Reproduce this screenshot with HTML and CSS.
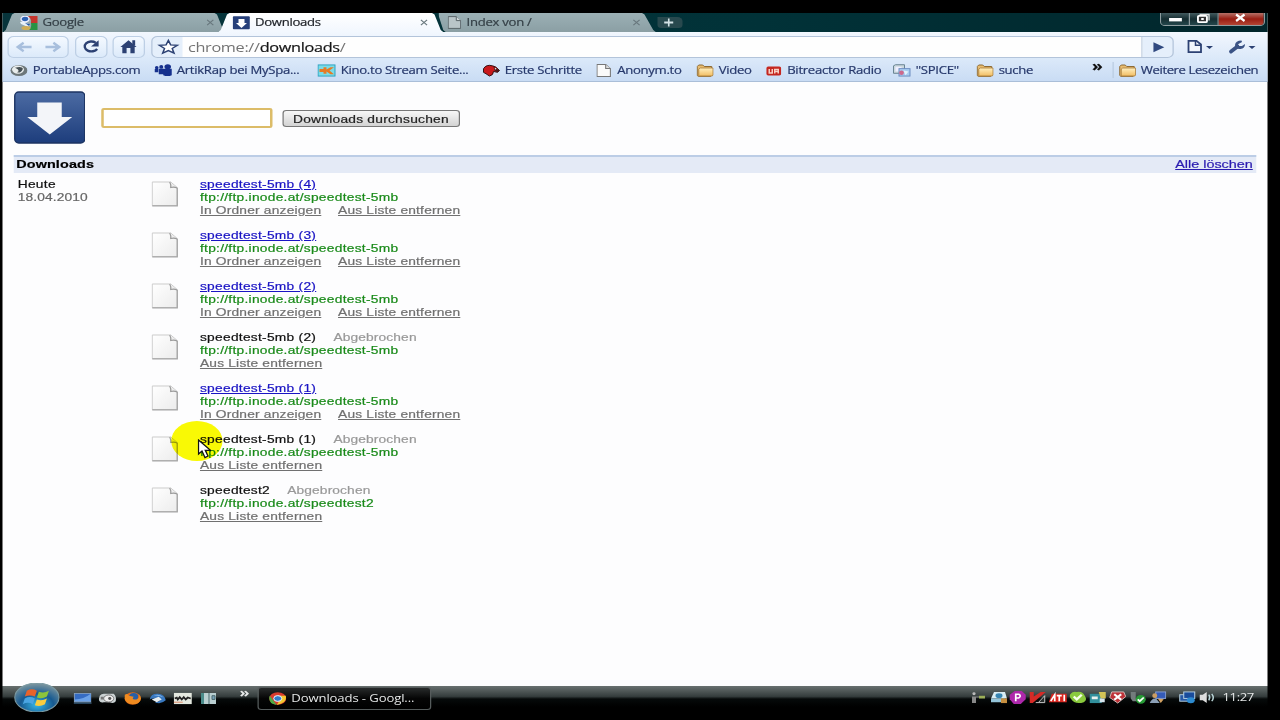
FILE: index.html
```
<!DOCTYPE html>
<html lang="de">
<head>
    <meta charset="UTF-8">
    <title>Downloads</title>
    <link rel="stylesheet" href="styles.css">
</head>
<body>
    <!-- shared icons -->
    <svg class="defs">
        <defs>
            <linearGradient id="paper" x1="0" y1="0" x2="1" y2="1"><stop offset="0" stop-color="#fff"/><stop offset="1" stop-color="#ececec"/></linearGradient>
            <linearGradient id="gold" x1="0" y1="0" x2="0" y2="1"><stop offset="0" stop-color="#fff0c0"/><stop offset="1" stop-color="#f2bd62"/></linearGradient>
            <linearGradient id="navy" x1="0" y1="0" x2="0" y2="1"><stop offset="0" stop-color="#4c6ba3"/><stop offset="1" stop-color="#1d3d7c"/></linearGradient>
            <radialGradient id="orb" cx=".5" cy=".75" r=".75"><stop offset="0" stop-color="#35b8e8"/><stop offset=".5" stop-color="#175a91"/><stop offset="1" stop-color="#82999f"/></radialGradient>
        </defs>
        <symbol id="folder" viewBox="0 0 18 13" preserveAspectRatio="none">
            <path d="M1 11.5V2.5L2.5 1H6.5L8 2.5H15.5V11L14.5 12.3H2Z" fill="#e8bc70" stroke="#8d6a35"/>
            <path d="M2.5 11.8V5L4 4H16.8V11L16 12H3Z" fill="url(#gold)" stroke="#a67a39" stroke-width=".8"/>
        </symbol>
        <symbol id="page" viewBox="0 0 14 13" preserveAspectRatio="none">
            <path d="M.7 .6H8.8L13.2 4.6V12.4H.7Z" fill="#fafafa" stroke="#777"/>
            <path d="M8.8 .6V4.6H13.2" fill="#ddd" stroke="#777"/>
        </symbol>
        <symbol id="page-gray" viewBox="0 0 14 13" preserveAspectRatio="none">
            <path d="M.7 .6H8.8L13.2 4.6V12.4H.7Z" fill="#b9c5c8" stroke="#596468"/>
            <path d="M8.8 .6V4.6H13.2" fill="#d3dbdd" stroke="#596468"/>
        </symbol>
        <symbol id="file" viewBox="0 0 27 26" preserveAspectRatio="none">
            <path d="M1 1H19.5L26 6.5V24.5H1Z" fill="url(#paper)" stroke="#ccc"/>
            <path d="M1 24.8H26V7" fill="none" stroke="#a5a5a5" stroke-width="1.3"/>
            <path d="M18.5 1Q20 4 19.5 6.5Q23 5.5 26 7" fill="#eee" stroke="#999" stroke-width="1.2"/>
        </symbol>
        <symbol id="close" viewBox="0 0 9 8" preserveAspectRatio="none">
            <path d="M1 1L8 7M8 1L1 7" stroke="currentColor" stroke-width="1.4"/>
        </symbol>
    </svg>

    <div class="screen">
        <div class="window">
            <header class="tabstrip">
                <div class="tab tab-google">
                    <svg class="tab-icon" viewBox="0 0 18 14" preserveAspectRatio="none"><path d="M7 0H18V7H11Q12 2 7 0Z" fill="#c5352d"/><path d="M11 7H18V14H9Q12 11 11 7Z" fill="#299345"/><ellipse cx="5" cy="3" rx="4" ry="2.8" fill="#2d63b4" stroke="#eef" stroke-width="1.3"/><path d="M0 6Q6 5 10 9L8 11L1 8Z" fill="#e8f0f8"/><path d="M5 7L10 8L9 10Z" fill="#2558a4"/><ellipse cx="6" cy="12" rx="4.5" ry="2" fill="#d0ad55"/></svg>
                    <span class="tab-title">Google</span>
                    <svg class="tab-close"><use href="#close"/></svg>
                </div>
                <div class="tab tab-active">
                    <svg class="tab-icon" viewBox="0 0 18 14" preserveAspectRatio="none"><rect x=".3" y=".3" width="17" height="13" rx="1" fill="#263f7a"/><path d="M6 3H12V7H14.5L9 12L3.5 7H6Z" fill="#fff"/></svg>
                    <span class="tab-title">Downloads</span>
                    <svg class="tab-close"><use href="#close"/></svg>
                </div>
                <div class="tab tab-index">
                    <svg class="tab-icon tab-page"><use href="#page-gray"/></svg>
                    <span class="tab-title">Index von /</span>
                    <svg class="tab-close"><use href="#close"/></svg>
                </div>
                <div class="new-tab"><svg viewBox="0 0 11 9" preserveAspectRatio="none"><path d="M5.5 .5V8.5M.5 4.5H10.5" stroke="#d3e2e5" stroke-width="1.8"/></svg></div>
                <div class="window-buttons">
                    <div class="win-btn"><svg viewBox="0 0 28 12" preserveAspectRatio="none"><rect x="8" y="5" width="13" height="3.4" fill="#fff"/></svg></div>
                    <div class="win-btn"><svg viewBox="0 0 26 12" preserveAspectRatio="none"><path d="M9 1.5H18V7.5" fill="none" stroke="#ddd" stroke-width="1.3"/><rect x="7.5" y="2.8" width="8.5" height="6.4" rx="1" fill="#333" stroke="#fff" stroke-width="1.8"/><rect x="10.6" y="5" width="2.4" height="2" fill="#fff"/></svg></div>
                    <div class="win-btn win-close"><svg viewBox="0 0 48 12" preserveAspectRatio="none"><path d="M18.5 1.5L27.5 8M27.5 1.5L18.5 8" stroke="#fff" stroke-width="2.4"/></svg></div>
                </div>
            </header>

            <div class="toolbar">
                <div class="tool-btn nav-btns">
                    <svg viewBox="0 0 60 21" preserveAspectRatio="none"><g fill="none" stroke="#a8bfdd" stroke-width="2.4"><path d="M23 10.5H9M15 6L9 10.5L15 15M37 10.5H51M45 6L51 10.5L45 15"/></g></svg>
                </div>
                <div class="tool-btn">
                    <svg viewBox="0 0 31 21" preserveAspectRatio="none"><path d="M20.5 6A7 5.2 0 1 0 22 12.5" fill="none" stroke="#2c4173" stroke-width="2.5"/><path d="M23.5 3.5V10H15.5Z" fill="#2c4173"/></svg>
                </div>
                <div class="tool-btn">
                    <svg viewBox="0 0 31 21" preserveAspectRatio="none"><path d="M7 10.5L15.5 3.5L24 10.5H22V17H17.5V11.5H13.5V17H9V10.5Z" fill="#2c4173"/><path d="M19.5 3.5H22.5V9H19.5Z" fill="#2c4173"/></svg>
                </div>
                <div class="address">
                    <svg class="star" viewBox="0 0 31 21" preserveAspectRatio="none"><path d="M16 3.5L18.3 8.3L25 8.8L19.9 12.1L21.7 17L16 14.2L10.3 17L12.1 12.1L7 8.8L13.7 8.3Z" fill="#fff" stroke="#2c4173" stroke-width="1.5"/></svg>
                    <div class="url">chrome://<b>downloads</b>/</div>
                    <svg class="go" viewBox="0 0 31 21" preserveAspectRatio="none"><path d="M11 5.5L22 10.8L11 16Z" fill="#304980"/></svg>
                </div>
                <svg class="menu-icon" viewBox="0 0 30 20" preserveAspectRatio="none"><path d="M3.5 3.8H11.5L16 7.5V15.2H3.5Z" fill="#f1f6fd" stroke="#2c4173" stroke-width="1.8"/><path d="M10.5 4V8.3H16" fill="none" stroke="#2c4173" stroke-width="1.5"/><path d="M21 9H28L24.5 12Z" fill="#2c4173"/></svg>
                <svg class="menu-icon" viewBox="0 0 30 20" preserveAspectRatio="none"><path d="M3.5 14.5L10 9.5" stroke="#3b5385" stroke-width="3.8" stroke-linecap="round"/><path d="M14 3.5Q8 3.5 7.5 8Q7.5 12.5 13 12Q17.5 11.5 17.5 7L14.5 9H11.5L10.5 7.2L14.5 5Z" fill="#3b5385"/><path d="M21 9H28L24.5 12Z" fill="#2c4173"/></svg>
            </div>

            <nav class="bookmarks">
                <a><svg viewBox="0 0 18 14" preserveAspectRatio="none"><ellipse cx="9" cy="7" rx="8.5" ry="6" fill="#6d777a"/><ellipse cx="8" cy="6" rx="6" ry="4.4" fill="#e9eded"/><path d="M5 4Q12 2 13 5Q11 10 7 9Q11 7 5 4Z" fill="#465055"/></svg>PortableApps.com</a>
                <a><svg viewBox="0 0 18 14" preserveAspectRatio="none"><g fill="#16308d"><circle cx="3" cy="4" r="1.8"/><circle cx="7.5" cy="3.2" r="2"/><ellipse cx="14" cy="3" rx="3.3" ry="2.7"/><path d="M1 5.5H4.5V9H1ZM5 5H9.5V11H5ZM9.5 5H18V12Q14 14 9.5 12Z"/></g></svg>ArtikRap bei MySpa...</a>
                <a><svg viewBox="0 0 18 14" preserveAspectRatio="none"><rect x=".5" y="1" width="17" height="12" fill="#79dce8" stroke="#2e9fbe"/><path d="M2 5.5H6V3.5H9V6L13 3.5H16.5L12 7L16.5 11H13L9 8V10.5H6V8.5H2Z" fill="#e67a24"/></svg>Kino.to Stream Seite...</a>
                <a><svg viewBox="0 0 18 14" preserveAspectRatio="none"><path d="M1 5Q4 0 10 2Q13 2 17 7L15 9L11 8Q11 12 7 13Q3 10 1 9Z" fill="#c9191c" stroke="#2d1113"/><path d="M11 3L17 7L15 9L12 7Z" fill="#48191a"/><circle cx="13" cy="5" r=".8" fill="#eee"/></svg>Erste Schritte</a>
                <a><svg class="small"><use href="#page"/></svg>Anonym.to</a>
                <a><svg><use href="#folder"/></svg>Video</a>
                <a><svg class="small" viewBox="0 0 15 13" preserveAspectRatio="none"><rect y="2.5" width="15" height="9" rx="2" fill="#c52720"/><path d="M3 5V9H6V5M8.5 9.5V5.5H12V9.5M8.5 7.5H12" fill="none" stroke="#f7d0c4" stroke-width="1.5"/></svg>Bitreactor Radio</a>
                <a><svg viewBox="0 0 18 14" preserveAspectRatio="none"><path d="M1 2L3 .8H12V10H1Z" fill="#cbd8de" stroke="#65808f"/><path d="M3 3H9V8H3Z" fill="#eef"/><rect x="6.5" y="5" width="11" height="8" fill="#a8cdf2" stroke="#6b8cc0"/><circle cx="9" cy="9.5" r="2.4" fill="#cc698d"/><path d="M11 7L16 8L13 12" fill="#e3f2fc"/></svg>''SPICE''</a>
                <a><svg><use href="#folder"/></svg>suche</a>
                <a class="overflow">»</a>
                <a class="others"><svg><use href="#folder"/></svg>Weitere Lesezeichen</a>
            </nav>

            <main>
                <div class="search">
                    <svg class="logo" viewBox="0 0 72 53" preserveAspectRatio="none"><rect x="1" y="1" width="70" height="51" rx="4" fill="url(#navy)" stroke="#1c3362" stroke-width="1.4"/><path d="M23.5 11.5H48V26H58.5L36 43.5L13.5 26H23.5Z" fill="#f3f5f9"/></svg>
                    <input type="text" class="search-input">
                    <button class="search-btn">Downloads durchsuchen</button>
                </div>
                <div class="summary">
                    <h1>Downloads</h1>
                    <a class="clear">Alle löschen</a>
                </div>
                <div class="history">
                    <div class="day">Heute<span>18.04.2010</span></div>
                    <ul class="downloads">
                        <li><svg><use href="#file"/></svg><div><p><a class="name">speedtest-5mb (4)</a></p><p class="src">ftp://ftp.inode.at/speedtest-5mb</p><p class="actions"><a>In Ordner anzeigen</a><a>Aus Liste entfernen</a></p></div></li>
                        <li><svg><use href="#file"/></svg><div><p><a class="name">speedtest-5mb (3)</a></p><p class="src">ftp://ftp.inode.at/speedtest-5mb</p><p class="actions"><a>In Ordner anzeigen</a><a>Aus Liste entfernen</a></p></div></li>
                        <li><svg><use href="#file"/></svg><div><p><a class="name">speedtest-5mb (2)</a></p><p class="src">ftp://ftp.inode.at/speedtest-5mb</p><p class="actions"><a>In Ordner anzeigen</a><a>Aus Liste entfernen</a></p></div></li>
                        <li><svg><use href="#file"/></svg><div><p>speedtest-5mb (2)<span class="status">Abgebrochen</span></p><p class="src">ftp://ftp.inode.at/speedtest-5mb</p><p class="actions"><a>Aus Liste entfernen</a></p></div></li>
                        <li><svg><use href="#file"/></svg><div><p><a class="name">speedtest-5mb (1)</a></p><p class="src">ftp://ftp.inode.at/speedtest-5mb</p><p class="actions"><a>In Ordner anzeigen</a><a>Aus Liste entfernen</a></p></div></li>
                        <li><svg><use href="#file"/></svg><div><p>speedtest-5mb (1)<span class="status">Abgebrochen</span></p><p class="src">ftp://ftp.inode.at/speedtest-5mb</p><p class="actions"><a>Aus Liste entfernen</a></p></div></li>
                        <li><svg><use href="#file"/></svg><div><p>speedtest2<span class="status">Abgebrochen</span></p><p class="src">ftp://ftp.inode.at/speedtest2</p><p class="actions"><a>Aus Liste entfernen</a></p></div></li>
                    </ul>
                </div>
            </main>
        </div>

        <footer class="taskbar">
            <svg class="start" viewBox="0 0 46 30" preserveAspectRatio="none"><ellipse cx="23" cy="15" rx="22" ry="15" fill="url(#orb)" stroke="#7b9aa3"/><path d="M13 8Q18 5 23 8L21 14Q16 12 11 14Z" fill="#e8632b"/><path d="M25 9Q30 11 35 8L33 14Q28 17 23 15Z" fill="#8cc43c"/><path d="M11 16Q16 13 21 16L19 22Q14 19 9 22Z" fill="#4aa5e2"/><path d="M23 17Q28 19 33 16L31 22Q26 25 21 23Z" fill="#f9cc3e"/></svg>
            <div class="quick">
                <svg viewBox="0 0 18 14" preserveAspectRatio="none"><path d="M0 1H18V13H0Z" fill="#8fa4b8"/><path d="M1 2H17V10H1Z" fill="#356cc3"/><path d="M1 8Q10 8 17 2V10H1Z" fill="#6ba2e8"/><path d="M0 11H18V13H0Z" fill="#27445c"/></svg>
                <svg viewBox="0 0 18 14" preserveAspectRatio="none"><path d="M1 4Q3 1 7 2H15Q18 5 17 10Q15 13 11 11H5Q1 12 0 8Z" fill="#cbd2d3"/><ellipse cx="10" cy="7" rx="5" ry="3.8" fill="#eee" stroke="#777"/><circle cx="11" cy="7" r="1.6" fill="#555"/><path d="M2 5H5V8H2Z" fill="#777"/></svg>
                <svg viewBox="0 0 18 14" preserveAspectRatio="none"><ellipse cx="9" cy="7" rx="8" ry="6.7" fill="#e46d16"/><ellipse cx="10" cy="5" rx="4.5" ry="3.8" fill="#285fa6"/><path d="M1 3Q4 1 5 4L10 5Q7 9 13 8Q17 6 15 2Q20 8 14 12Q5 15 1 8Z" fill="#ef8b20"/></svg>
                <svg viewBox="0 0 18 14" preserveAspectRatio="none"><path d="M1 8Q2 1 10 2Q16 3 17 9Q12 14 6 11Q10 11 12 8L5 7Q2 7 1 8Z" fill="#3978bf"/><path d="M3 8L10 5L13 8L8 11Z" fill="#e7eef2"/><path d="M5 4Q10 1 15 6Q9 3 5 4Z" fill="#8bbceb"/></svg>
                <svg viewBox="0 0 18 14" preserveAspectRatio="none"><rect y="1" width="18" height="12" fill="#e4e8df"/><path d="M1 7L3 6L4 8L6 5.5L8 8L10 5.5L12 8L14 6L17 7" fill="none" stroke="#222" stroke-width="1.8"/><path d="M0 11H9" stroke="#df8a66"/></svg>
                <svg viewBox="0 0 18 14" preserveAspectRatio="none"><path d="M1 1H8V13H1Z" fill="#4b8c8b"/><path d="M4 1H16V13H4Z" fill="#bacfd1"/><path d="M9 1V13M12 4H15V8H12Z" fill="#79a1b9" stroke="#48686b"/></svg>
            </div>
            <span class="more">»</span>
            <div class="task">
                <svg viewBox="0 0 18 14" preserveAspectRatio="none"><ellipse cx="9" cy="7" rx="8.5" ry="6.7" fill="#d93b2d"/><path d="M1 4L8 14Q0 13 .5 6Z" fill="#4dab45"/><path d="M9 4H17Q19 12 8 14L12 7Z" fill="#f2c62f"/><ellipse cx="9" cy="7" rx="4" ry="3.1" fill="#327cc8" stroke="#fff"/></svg>
                <span>Downloads - Googl...</span>
            </div>
            <div class="tray">
                <svg viewBox="0 0 18 14" preserveAspectRatio="none"><circle cx="4" cy="3" r="1.6" fill="#bbb"/><path d="M2 6H6V13H2ZM6 6H9V7H6Z" fill="#888"/><path d="M9 5H15V8H9Z" fill="#9caf58"/></svg>
                <svg viewBox="0 0 18 14" preserveAspectRatio="none"><path d="M4 1H15L17 8H1Z" fill="#d9edf4"/><path d="M1 8H15V12H1Z" fill="#94c4d8"/><ellipse cx="9" cy="5" rx="3.5" ry="2.5" fill="#3684b1"/><rect x="11" y="8" width="6" height="5" fill="#c68f40"/></svg>
                <svg viewBox="0 0 18 14" preserveAspectRatio="none"><path d="M6 0H13L17 4V9L12 14H5L1 9V4Z" fill="#ae28ab"/><path d="M7 11V3.5H10Q13 5 10 7.5H7" fill="none" stroke="#fff" stroke-width="1.7"/></svg>
                <svg viewBox="0 0 18 14" preserveAspectRatio="none"><path d="M7 12.5H16V5L10 12" fill="#272c2b" stroke="#ccc"/><path d="M1 1H5V6L12 1H17L4 13H1Z" fill="#d52b27"/></svg>
                <svg viewBox="0 0 18 14" preserveAspectRatio="none"><path d="M3 3H18V12H0Z" fill="#d9261f"/><path d="M2 11L6 4V11M8 5H13M10.5 5V11M15.5 4V11" fill="none" stroke="#fff" stroke-width="1.7"/></svg>
                <svg viewBox="0 0 18 14" preserveAspectRatio="none"><path d="M2 3Q4 0 8 1Q14 0 16 5Q19 10 15 12Q6 15 2 8Q0 5 2 3Z" fill="#8aca3d"/><path d="M5 6L8 9L13 4" fill="none" stroke="#f7ffe9" stroke-width="2.4"/></svg>
                <svg viewBox="0 0 18 14" preserveAspectRatio="none"><rect x="1" y="3" width="12" height="10" fill="#318f9b"/><path d="M3 6H9V9H3Z" fill="#e9f0ed"/><path d="M10 1H17V8H12Z" fill="#d3c456"/><path d="M11 8H16V12H11Z" fill="#d8e6ee"/></svg>
                <svg viewBox="0 0 18 14" preserveAspectRatio="none"><path d="M3 1H15L17 6L9 13L1 7Z" fill="#be3238" stroke="#d6bbb8"/><path d="M5.5 3.5L12.5 9.5M12.5 3.5L5.5 9.5" stroke="#fff" stroke-width="2.2"/></svg>
                <svg viewBox="0 0 18 14" preserveAspectRatio="none"><path d="M2 1H7V8H10V11H4L2 8Z" fill="#737c7c"/><ellipse cx="12" cy="9" rx="5" ry="4.7" fill="#279b35"/><path d="M9 9L11 11L15 7" fill="none" stroke="#fff" stroke-width="1.8"/></svg>
                <svg viewBox="0 0 18 14" preserveAspectRatio="none"><rect x="7" y="1" width="10" height="7" fill="#345bb8" stroke="#8aa2d4"/><circle cx="6" cy="5" r="2.5" fill="#cb9d63"/><path d="M1 13Q4 6 8 9L11 13Z" fill="#8b9fb6"/><path d="M9 8L15 9L12 13Z" fill="#d4a363"/></svg>
                <svg class="net" viewBox="0 0 18 14" preserveAspectRatio="none"><rect x="1" y="4" width="11" height="7" fill="#2859a4" stroke="#b7d1e2"/><rect x="5" y="1" width="11" height="7" fill="#194c9c" stroke="#b7d1e2"/><ellipse cx="12" cy="10" rx="4" ry="3.3" fill="#2d8bd0"/></svg>
                <svg class="volume" viewBox="0 0 18 14" preserveAspectRatio="none"><path d="M1 4H4L8 1V13L4 10H1Z" fill="#ddd"/><path d="M10 4Q12 7 10 10M13 3Q16 7 13 11" fill="none" stroke="#bcd7da" stroke-width="1.4"/></svg>
                <time>11:27</time>
            </div>
        </footer>

        <div class="click-spot"></div>
        <svg class="cursor" viewBox="0 0 14 20" preserveAspectRatio="none"><path d="M1 1V15L4.5 12L7.5 18.5L10.5 17L7.8 11.3H13Z" fill="#fff" stroke="#111" stroke-width="1.3"/></svg>
    </div>
</body>
</html>
```
FILE: styles.css
```
* {
    margin: 0;
    padding: 0;
    box-sizing: border-box;
}

body {
    width: 1280px;
    height: 720px;
    overflow: hidden;
    background: #000;
}

.defs {
    position: absolute;
    width: 0;
    height: 0;
}

svg {
    display: block;
    flex: none;
}

/* 1024px wide desktop stretched to widescreen */
.screen {
    position: relative;
    width: 1024px;
    height: 720px;
    padding-top: 13px;
    transform: scaleX(1.25);
    transform-origin: 0 0;
    font-family: "Open Sans", "Noto Sans", sans-serif;
    font-size: 10.5px;
    letter-spacing: -.23px;
    white-space: nowrap;
}

.window {
    width: 1012px;
    height: 673px;
    margin-left: 1.6px;
    background: #fdfdfe;
}

/* Tabs */
.tabstrip {
    display: flex;
    height: 19px;
    padding-left: 1px;
    background: linear-gradient(90deg, #07343b, #013238 60%, #01262b);
}

.tab {
    display: flex;
    align-items: center;
    width: 177px;
    height: 19px;
    padding: 0 7px 0 13px;
    margin-right: -5px;
    background: linear-gradient(#9bb0b5, #8b9fa4);
    color: #354047;
    -webkit-text-stroke: .2px;
    clip-path: polygon(0 100%, 2px 90%, 7px 8%, 9px 0, 169px 0, 171px 8%, 176px 90%, 177px 100%);
}

.tab-google {
    padding-right: 8px;
}

.tab-active {
    z-index: 1;
    width: 181px;
    background: linear-gradient(#fff, #f2f7fe);
    color: #1d2026;
    padding-left: 11px;
    padding-right: 13px;
    clip-path: polygon(0 100%, 2px 90%, 7px 8%, 9px 0, 171px 0, 173px 8%, 178px 90%, 180px 100%);
}

.tab-index {
    width: 174px;
    padding-left: 7.5px;
    padding-right: 12px;
    clip-path: polygon(6px 100%, 4px 90%, 0 8%, 0 0, 163px 0, 165px 8%, 172px 90%, 174px 100%);
}

.tab-icon {
    width: 14.4px;
    height: 14px;
    margin-right: 4px;
}

.tab-page {
    width: 11.2px;
    height: 13px;
}

.tab-title {
    flex: 1;
    line-height: 17px;
    margin-bottom: 1px;
}

.tab-close {
    width: 6.4px;
    height: 7px;
    color: #68777d;
}

.new-tab {
    width: 20px;
    height: 11px;
    margin: 4px 0 0 6px;
    padding: 1px 5px;
    border-radius: 0 4px 3px 3px;
    background: #28494e;
}

.new-tab svg {
    width: 8px;
    height: 9px;
}

.window-buttons {
    display: flex;
    width: 84px;
    height: 13px;
    margin: 0 2px 0 auto;
    border: 1px solid #8f9da0;
    border-top: 0;
    border-radius: 0 0 4px 4px;
    overflow: hidden;
}

.win-btn {
    width: 23px;
    height: 12px;
    background: linear-gradient(#41595d, #142c30 50%, #24474c);
    border-right: 1px solid #8f9da0;
}

.win-btn svg {
    width: 100%;
    height: 100%;
}

.win-close {
    flex: 1;
    border: 0;
    background: linear-gradient(#b57167, #981d12 50%, #b34534);
}

/* Toolbar */
.toolbar {
    display: flex;
    height: 28px;
    padding: 4px 4px 2px 4px;
    background: linear-gradient(#f2f7fe, #dae8f9);
}

.tool-btn {
    flex: none;
    width: 25.6px;
    height: 22px;
    margin-right: 4.8px;
    border: 1px solid #bdcfe5;
    border-radius: 5px;
    background: linear-gradient(#f4f9ff, #dceafa);
}

.tool-btn svg {
    width: 100%;
    height: 100%;
}

.nav-btns {
    width: 49.6px;
}

.address {
    display: flex;
    flex: none;
    width: 818.4px;
    height: 22px;
    margin-right: 8.4px;
    border: 1px solid #b3c4da;
    border-radius: 5px;
    background: #e5effb;
}

.star, .go {
    width: 24.6px;
    height: 20px;
}

.url {
    flex: 1;
    padding-left: 4px;
    background: #fefefe;
    border-right: 1px solid #c3d1e2;
    color: #737373;
    font-size: 13px;
    letter-spacing: -.25px;
    line-height: 20px;
}

.url b {
    color: #151515;
    font-weight: 400;
    -webkit-text-stroke: .2px;
}

.menu-icon {
    width: 24px;
    height: 20px;
    margin: 1px 10.4px 0 0;
}

/* Bookmarks */
.bookmarks {
    display: grid;
    grid-template-columns: 115.2px 131.2px 131.2px 91.2px 80px 56px 101.6px 66.4px 92.8px 16.8px 1fr;
    grid-template-rows: 20px;
    height: 22px;
    padding-left: 6.4px;
    background: linear-gradient(#dae8f9, #c9dcf4);
    border-bottom: 1px solid #aabed8;
    color: #27396c;
    -webkit-text-stroke: .2px;
}

.bookmarks a {
    display: flex;
    align-items: center;
    height: 20px;
    line-height: 20px;
}

.bookmarks svg {
    width: 14.4px;
    height: 13px;
    margin-right: 3.8px;
}

.bookmarks svg.small {
    width: 12px;
    margin-right: 5px;
}

.bookmarks .overflow {
    color: #111;
    font-size: 14px;
    font-weight: 700;
    line-height: 12px;
    align-items: flex-start;
}

.bookmarks .others {
    height: 16px;
    margin-top: 2px;
    padding-left: 3.2px;
    border-left: 1px solid #b9cbe1;
    letter-spacing: -.34px;
}

/* Downloads page */
main {
    font-family: "Liberation Sans", Arial, sans-serif;
    padding: 9px 9px 0;
    -webkit-text-stroke: .2px;
}

.search {
    display: flex;
    align-items: center;
    height: 53px;
}

.logo {
    width: 57.6px;
    height: 53px;
    margin-right: 12.6px;
}

.search-input {
    width: 137.6px;
    height: 20px;
    margin-top: 1px;
    border: 2px solid #dcbc68;
    border-radius: 2px;
    background: #fff;
    outline: 0;
}

.search-btn {
    width: 142px;
    height: 17px;
    margin: 2px 0 0 7.4px;
    border: 1px solid #777;
    border-radius: 3px;
    background: linear-gradient(#f7f7f7, #d3d3d3);
    color: #222;
    font: 11px/14px "Liberation Sans", Arial, sans-serif;
    letter-spacing: .2px;
}

.summary {
    display: flex;
    justify-content: space-between;
    height: 18px;
    margin-top: 11px;
    padding: 0 2.4px;
    background: #e4eaf6;
    border-top: 2px solid #bccde6;
    font-size: 11.5px;
    line-height: 15px;
    letter-spacing: 0;
}

.summary h1 {
    font-size: 11.5px;
    letter-spacing: .1px;
}

.clear {
    color: #2a1bb0;
    text-decoration: underline;
}

.history {
    display: flex;
    margin-top: 5px;
    padding-left: 3.6px;
    font-size: 11px;
    line-height: 13px;
    letter-spacing: .22px;
}

.day {
    width: 107px;
    color: #111;
}

.day span {
    display: block;
    color: #666;
    letter-spacing: .1px;
}

.downloads {
    list-style: none;
}

.downloads li {
    display: flex;
    height: 51px;
    color: #111;
}

.downloads svg {
    width: 21.6px;
    height: 26px;
    margin: 3px 17.2px 0 0;
}

.name {
    color: #1a14c4;
    text-decoration: underline;
}

.src {
    color: #198a19;
}

.status {
    margin-left: 13.8px;
    color: #999;
    letter-spacing: .1px;
}

.actions {
    letter-spacing: .16px;
}

.actions a {
    margin-right: 13.4px;
    color: #707070;
    text-decoration: underline;
}

/* Taskbar */
.taskbar {
    display: flex;
    align-items: center;
    width: 1012px;
    height: 26px;
    margin-left: 1.6px;
    padding-left: 9.6px;
    background: linear-gradient(#68706f, #353d3d 40%, #060a0a 50%, #000 80%);
    color: #e6e8e8;
}

.start {
    width: 37px;
    height: 29px;
    margin-top: -3px;
}

.quick {
    display: flex;
    gap: 5.8px;
    margin: -2px 0 0 10.5px;
}

.quick svg, .task svg {
    width: 14.4px;
    height: 13px;
}

.more {
    margin: -14px 0 0 17.5px;
    font-size: 13px;
    font-weight: 700;
    width: 14.5px;
}

.task {
    display: flex;
    align-items: center;
    gap: 3.6px;
    width: 138.5px;
    height: 23px;
    margin-top: -2px;
    padding-left: 8px;
    border: 1px solid #565c5c;
    border-radius: 3px;
    background: linear-gradient(#282b2b, #050505 50%, #000);
    letter-spacing: -.1px;
}

.tray {
    display: flex;
    align-items: center;
    gap: 1.5px;
    margin: -4px 10.4px 0 auto;
}

.tray svg {
    width: 14.4px;
    height: 13px;
}

.tray .net {
    margin-left: 8.8px;
}

.tray time {
    margin-left: 2.8px;
    letter-spacing: -.3px;
}

/* Pointer with click highlight */
.click-spot {
    position: absolute;
    left: 136.8px;
    top: 421px;
    width: 41.6px;
    height: 40px;
    border-radius: 50%;
    background: #fbfb05;
    mix-blend-mode: multiply;
}

.cursor {
    position: absolute;
    left: 157.6px;
    top: 439px;
    width: 11.2px;
    height: 20px;
}
```
